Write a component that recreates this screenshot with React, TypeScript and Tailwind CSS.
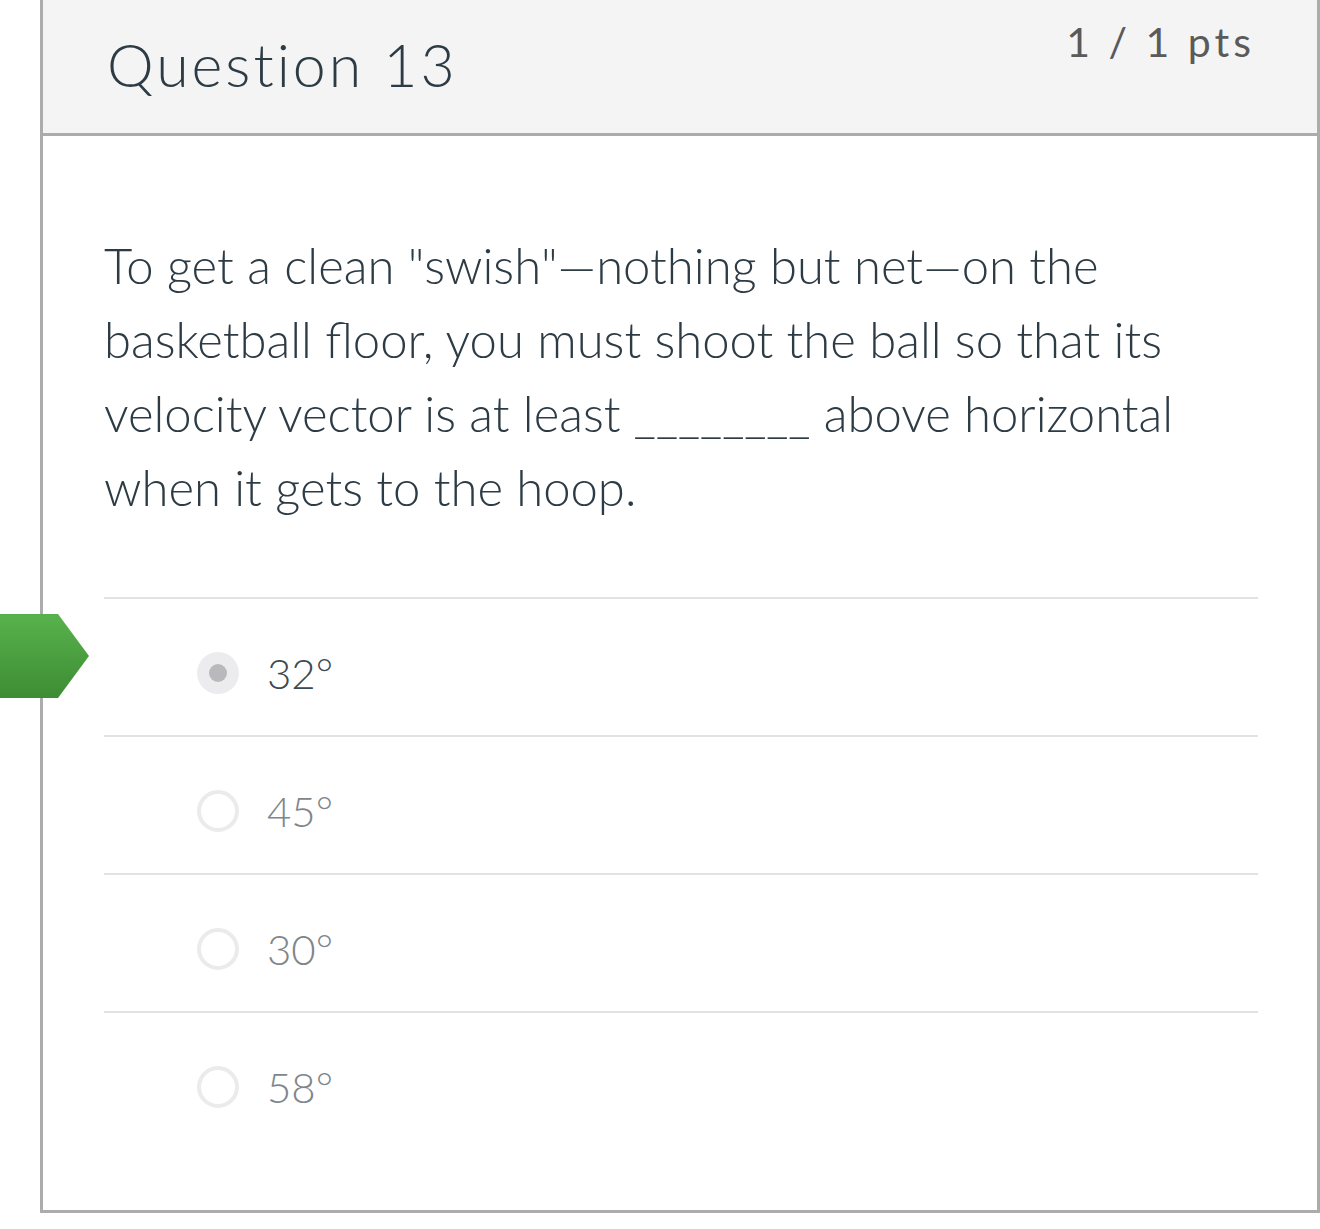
import React from 'react';

interface Answer {
  id: string;
  label: string;
  selected?: boolean;
}

const answers: Answer[] = [
  { id: 'a', label: '32°', selected: true },
  { id: 'b', label: '45°' },
  { id: 'c', label: '30°' },
  { id: 'd', label: '58°' },
];

// Correct answer marker
const CorrectArrow = () => (
  <svg
    className="absolute left-0 top-[614px] z-10"
    width="90"
    height="84"
    viewBox="0 0 90 84"
  >
    <defs>
      <linearGradient id="green" x1="0" y1="0" x2="0" y2="1">
        <stop offset="0" stopColor="#58b24c" />
        <stop offset="1" stopColor="#3e8c34" />
      </linearGradient>
    </defs>
    <polygon points="0,0 58,0 89,42 58,84 0,84" fill="url(#green)" />
  </svg>
);

const Radio: React.FC<{ selected?: boolean }> = ({ selected }) => {
  if (selected) {
    return (
      <span className="w-[42px] h-[42px] rounded-full bg-[#ececee] flex items-center justify-center shrink-0">
        <span className="w-[18px] h-[18px] rounded-full bg-[#b9b9bd]" />
      </span>
    );
  }
  return <span className="w-[42px] h-[42px] rounded-full border-4 border-[#ebebeb] bg-white shrink-0" />;
};

export default function App() {
  return (
    <div
      className="relative min-h-[1229px] bg-white pl-10"
      style={{ fontFamily: 'Lato, "Open Sans", sans-serif' }}
    >
      <CorrectArrow />
      <div className="w-[1280px] border-x-[3px] border-b-[3px] border-[#acacac]">
        {/* Header */}
        <div className="relative h-[136px] bg-[#f4f4f4] border-b-[3px] border-[#acacac] pl-16 pr-[62px] flex items-center justify-between">
          <h1 className="text-[59px] font-light text-[#2d3b45] tracking-[3px] pb-0.5">Question 13</h1>
          <span className="self-start mt-[11px] text-[41px] text-[#5a5a5a] tracking-[4px]">1 / 1 pts</span>
        </div>

        {/* Body */}
        <div className="pl-[61px] pr-[59px] pt-[92px] pb-[61px]">
          <p className="text-[49px] leading-[74px] font-light text-[#2d3b45] pb-[73px]">
            To get a clean "swish"—nothing but net—on the basketball floor, you must shoot the ball so that its
            velocity vector is at least ________ above horizontal when it gets to the hoop.
          </p>

          <div>
            {answers.map((a) => (
              <div
                key={a.id}
                className="h-[138px] border-t-2 border-[#e2e2e2] flex items-center gap-[28px] pl-[93px] pt-3"
              >
                <Radio selected={a.selected} />
                <span
                  className={`text-[42px] font-light ${a.selected ? 'text-[#3b4954]' : 'text-[#7e868c]'}`}
                >
                  {a.label}
                </span>
              </div>
            ))}
          </div>
        </div>
      </div>
    </div>
  );
}
